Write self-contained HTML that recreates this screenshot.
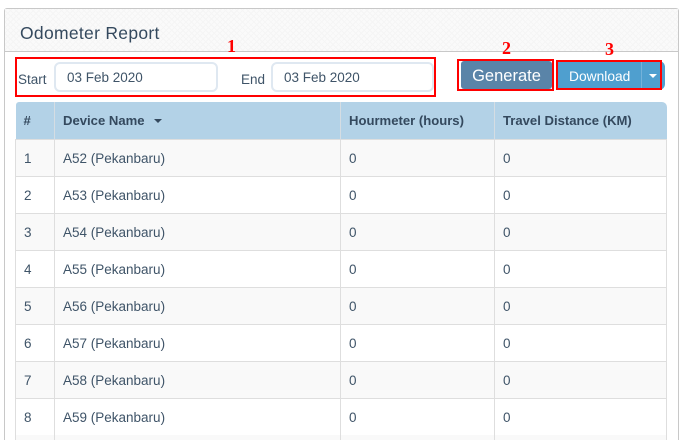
<!DOCTYPE html>
<html>
<head>
<meta charset="utf-8">
<style>
html,body{margin:0;padding:0;width:688px;height:440px;overflow:hidden;background:#fff;font-family:"Liberation Sans",sans-serif;color:#34495e;}
#wrap{position:relative;width:688px;height:440px;overflow:hidden;}
.a{position:absolute;box-sizing:border-box;white-space:nowrap;}
.panel{left:4px;top:8px;width:675px;height:432px;border:1px solid #c8c8c8;border-bottom:0;border-radius:3px 3px 0 0;background:#fff;}
.head{left:5px;top:9px;width:673px;height:43px;border-bottom:1px solid #c8c8c8;background:#fafafa;
background-image:repeating-linear-gradient(45deg,#f5f5f5 0 1px,transparent 1px 4px),repeating-linear-gradient(-45deg,#f5f5f5 0 1px,transparent 1px 4px);}
.title{left:20px;top:23px;font-size:17.5px;line-height:20px;color:#34495e;letter-spacing:.3px;}
.lbl{font-size:13.5px;line-height:16px;color:#3f5468;}
.input{height:30px;top:62px;border:2px solid #dfe8f1;border-radius:6px;background:#fff;font-size:13.5px;line-height:28px;color:#3f5468;padding-left:11px;}
.red{border:2px solid #f00;}
.num{font-family:"Liberation Serif",serif;font-weight:bold;font-size:18px;line-height:18px;color:#f00;}
.gen{left:461px;top:61px;width:91px;height:28px;background:#5a84a8;border-radius:3px;color:#fff;font-size:16.5px;line-height:30px;text-align:center;}
.dl{left:557px;top:61px;width:108px;height:29px;background:#4f9fcf;border-radius:3px 6px 6px 3px;color:#fff;font-size:13.8px;line-height:31px;padding-left:12px;}
.div{left:641px;top:62px;width:1px;height:27px;background:#74b2da;}
.caret{width:0;height:0;border-left:4px solid transparent;border-right:4px solid transparent;}
table{position:absolute;left:15px;top:102px;width:651px;border-collapse:collapse;table-layout:fixed;font-size:13.5px;color:#3f5468;}
th{height:37px;padding:1px 0 0 8px;background:#b3d2e7;text-align:left;font-size:13.1px;color:#34495e;border-left:1px solid #d5dde3;box-sizing:border-box;}
td{height:37px;padding:1px 0 0 8px;border:1px solid #dedede;box-sizing:border-box;}
th:first-child{border-left:0;border-top-left-radius:3px;}
th:last-child{border-top-right-radius:5px;}
tbody tr:nth-child(odd) td{background:#f9f9f9;}
tbody tr:nth-child(even) td{background:#fff;}
</style>
</head>
<body>
<div id="wrap">
<div class="a panel"></div>
<div class="a head"></div>
<div class="a title">Odometer Report</div>

<div class="a lbl" style="left:18px;top:72px;">Start</div>
<div class="a input" style="left:54px;width:164px;">03 Feb 2020</div>
<div class="a lbl" style="left:241px;top:72px;">End</div>
<div class="a input" style="left:271px;width:163px;">03 Feb 2020</div>
<div class="a red" style="left:15px;top:57px;width:421px;height:40px;"></div>

<div class="a gen">Generate</div>
<div class="a dl">Download</div>
<div class="a div"></div>
<div class="a caret" style="left:649px;top:74px;border-top:4px solid #fff;"></div>
<div class="a red" style="left:457px;top:59px;width:97px;height:32px;"></div>
<div class="a red" style="left:556px;top:60px;width:106px;height:30px;"></div>

<div class="a num" style="left:227px;top:37px;">1</div>
<div class="a num" style="left:502px;top:39px;">2</div>
<div class="a num" style="left:605px;top:40px;">3</div>

<table>
<colgroup><col style="width:39px"><col style="width:286px"><col style="width:154px"><col style="width:172px"></colgroup>
<thead><tr><th>#</th><th>Device Name<span style="display:inline-block;margin-left:9px;vertical-align:2px;width:0;height:0;border-left:4px solid transparent;border-right:4px solid transparent;border-top:4px solid #34495e;"></span></th><th>Hourmeter (hours)</th><th>Travel Distance (KM)</th></tr></thead>
<tbody>
<tr><td>1</td><td>A52 (Pekanbaru)</td><td>0</td><td>0</td></tr>
<tr><td>2</td><td>A53 (Pekanbaru)</td><td>0</td><td>0</td></tr>
<tr><td>3</td><td>A54 (Pekanbaru)</td><td>0</td><td>0</td></tr>
<tr><td>4</td><td>A55 (Pekanbaru)</td><td>0</td><td>0</td></tr>
<tr><td>5</td><td>A56 (Pekanbaru)</td><td>0</td><td>0</td></tr>
<tr><td>6</td><td>A57 (Pekanbaru)</td><td>0</td><td>0</td></tr>
<tr><td>7</td><td>A58 (Pekanbaru)</td><td>0</td><td>0</td></tr>
<tr><td>8</td><td>A59 (Pekanbaru)</td><td>0</td><td>0</td></tr>
</tbody>
</table>
<div class="a" style="left:15px;top:435px;width:652px;height:5px;border-left:1px solid #dedede;border-right:1px solid #dedede;background:#f9f9f9;"></div>
<div class="a" style="left:54px;top:435px;width:1px;height:5px;background:#dedede;"></div>
<div class="a" style="left:340px;top:435px;width:1px;height:5px;background:#dedede;"></div>
<div class="a" style="left:494px;top:435px;width:1px;height:5px;background:#dedede;"></div>
</div>
</body>
</html>
